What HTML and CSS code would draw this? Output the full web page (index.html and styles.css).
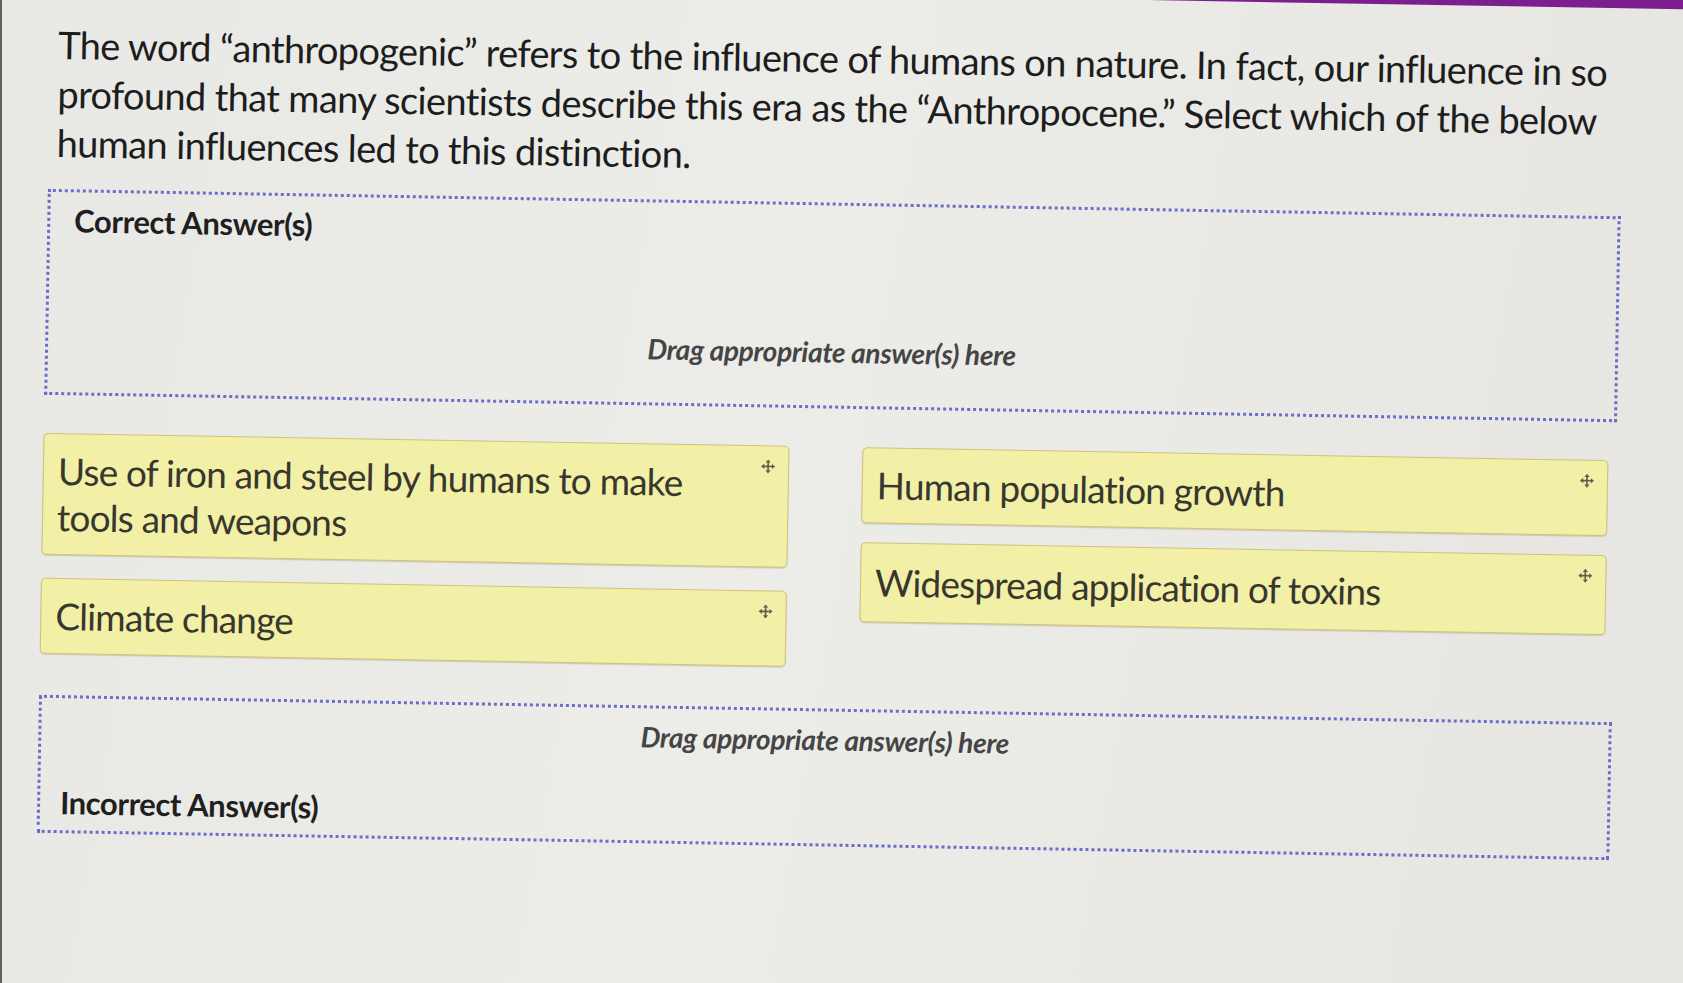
FILE: index.html
```html
<!DOCTYPE html>
<html lang="en">
<head>
<meta charset="utf-8">
<title>Anthropocene drag and drop</title>
<link rel="stylesheet" href="styles.css">
</head>
<body>
<div class="page">
  <div class="topbar"></div>
  <p class="question">The word “anthropogenic” refers to the influence of humans on nature. In fact, our influence in so profound that many scientists describe this era as the “Anthropocene.” Select which of the below human influences led to this distinction.</p>

  <section class="zone zone-correct">
    <h2 class="zone-title">Correct Answer(s)</h2>
    <div class="zone-hint">Drag appropriate answer(s) here</div>
  </section>

  <div class="cards">
    <div class="col">
      <div class="card">
        <span class="card-text">Use of iron and steel by humans to make tools and weapons</span>
        <svg class="move" viewBox="0 0 16 16" aria-hidden="true"><path d="M8 1 L10.6 4.2 H5.4 Z M8 15 L5.4 11.8 H10.6 Z M1 8 L4.2 5.4 V10.6 Z M15 8 L11.8 10.6 V5.4 Z"/><path d="M8 4 V12 M4 8 H12" class="move-line"/></svg>
      </div>
      <div class="card">
        <span class="card-text">Climate change</span>
        <svg class="move" viewBox="0 0 16 16" aria-hidden="true"><path d="M8 1 L10.6 4.2 H5.4 Z M8 15 L5.4 11.8 H10.6 Z M1 8 L4.2 5.4 V10.6 Z M15 8 L11.8 10.6 V5.4 Z"/><path d="M8 4 V12 M4 8 H12" class="move-line"/></svg>
      </div>
    </div>
    <div class="col col-right">
      <div class="card">
        <span class="card-text">Human population growth</span>
        <svg class="move" viewBox="0 0 16 16" aria-hidden="true"><path d="M8 1 L10.6 4.2 H5.4 Z M8 15 L5.4 11.8 H10.6 Z M1 8 L4.2 5.4 V10.6 Z M15 8 L11.8 10.6 V5.4 Z"/><path d="M8 4 V12 M4 8 H12" class="move-line"/></svg>
      </div>
      <div class="card card-tall">
        <span class="card-text">Widespread application of toxins</span>
        <svg class="move" viewBox="0 0 16 16" aria-hidden="true"><path d="M8 1 L10.6 4.2 H5.4 Z M8 15 L5.4 11.8 H10.6 Z M1 8 L4.2 5.4 V10.6 Z M15 8 L11.8 10.6 V5.4 Z"/><path d="M8 4 V12 M4 8 H12" class="move-line"/></svg>
      </div>
    </div>
  </div>

  <section class="zone zone-incorrect">
    <div class="zone-hint">Drag appropriate answer(s) here</div>
    <h2 class="zone-title">Incorrect Answer(s)</h2>
  </section>
</div>
</body>
</html>
```
FILE: styles.css
```css
html, body {
  margin: 0;
  padding: 0;
}
body {
  width: 1683px;
  height: 983px;
  overflow: hidden;
  background: linear-gradient(100deg, #e8e8e5 0%, #ecece9 45%, #e6e5e1 100%);
  border-left: 2px solid #5f5f5f;
  box-sizing: border-box;
  font-family: Lato, "Noto Sans", sans-serif;
  color: #1c1c1c;
}
.page {
  width: 1573px;
  padding: 0 56px 0 50px;
  transform: rotate(1deg);
  transform-origin: 0 0;
}
.topbar {
  height: 30px;
  margin: -50px -120px 0 -60px;
  background: #7b1f8e;
}
.question {
  margin: 0;
  padding: 39px 0 0 8px;
  font-size: 38px;
  line-height: 49px;
  letter-spacing: -0.65px;
  font-weight: 400;
  color: #1d1d1d;
}
.zone {
  border: 3px dotted #6a6ecb;
  display: flex;
  flex-direction: column;
  justify-content: space-between;
  box-sizing: border-box;
}
.zone-correct {
  margin-top: 22px;
  height: 206px;
  padding: 10px 24px 39px;
}
.zone-incorrect {
  margin-top: 41px;
  height: 138px;
  padding: 13px 20px 10px;
}
.zone-title {
  margin: 0;
  font-size: 31px;
  line-height: 36px;
  font-weight: 700;
  letter-spacing: -0.4px;
  color: #1f1f1f;
}
.zone-hint {
  align-self: center;
  font-size: 28px;
  line-height: 30px;
  font-weight: 700;
  font-style: italic;
  color: #454545;
  letter-spacing: -0.3px;
}
.cards {
  display: grid;
  grid-template-columns: 746px 746px;
  column-gap: 73px;
  margin-top: 38px;
  align-items: start;
}
.col {
  display: flex;
  flex-direction: column;
  gap: 23px;
}
.col-right {
  gap: 19px;
}
.card {
  position: relative;
  box-sizing: border-box;
  background: #f2efa6;
  border: 1.5px solid #d2c27c;
  border-radius: 5px;
  padding: 14px 70px 14px 14px;
  font-size: 37px;
  line-height: 46px;
  letter-spacing: -0.8px;
  font-weight: 400;
  color: #37372f;
  box-shadow: 0 1px 1px rgba(120, 110, 60, 0.25);
}
.card-tall {
  padding-top: 16px;
  padding-bottom: 16px;
}
.move {
  position: absolute;
  top: 12px;
  right: 12px;
  width: 16px;
  height: 16px;
  fill: #5b5b50;
}
.move-line {
  stroke: #5b5b50;
  stroke-width: 1.6;
  fill: none;
}
```
